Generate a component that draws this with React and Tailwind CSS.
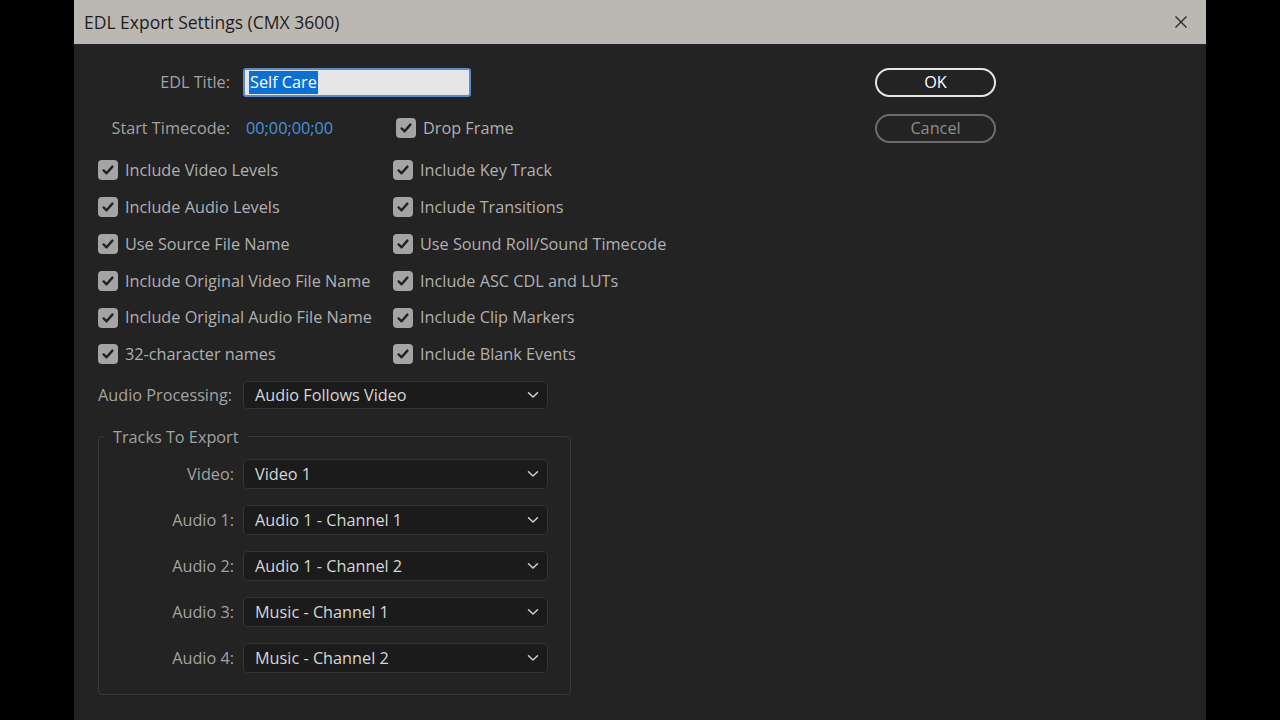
import React from "react";

const font = { fontFamily: '"Open Sans", "Noto Sans", sans-serif' };

function Check({ label }) {
  return (
    <div className="flex items-center h-full">
      <div className="w-[20px] h-[20px] rounded-[4px] bg-[#a4a4a4] flex items-center justify-center shrink-0">
        <svg width="14" height="14" viewBox="0 0 14 14">
          <path d="M2.6 7.4 L5.6 10.3 L11.4 3.6" fill="none" stroke="#222" strokeWidth="2.4" strokeLinecap="round" strokeLinejoin="round" />
        </svg>
      </div>
      <span className="ml-[7px] text-[#b0b0b0] whitespace-nowrap">{label}</span>
    </div>
  );
}

function Chevron() {
  return (
    <svg width="12" height="8" viewBox="0 0 12 8">
      <path d="M1.5 1.8 L6 6 L10.5 1.8" fill="none" stroke="#d0d0d0" strokeWidth="1.5" strokeLinecap="round" strokeLinejoin="round" />
    </svg>
  );
}

function Select({ value, h = "h-[30px]" }) {
  return (
    <div className={`w-[305px] ${h} bg-[#1b1b1b] border border-[#333333] rounded-[4px] flex items-center justify-between pl-[11px] pr-[8px]`}>
      <span className="text-[#d6d6d6] whitespace-nowrap">{value}</span>
      <Chevron />
    </div>
  );
}

export default function App() {
  const left = [
    "Include Video Levels",
    "Include Audio Levels",
    "Use Source File Name",
    "Include Original Video File Name",
    "Include Original Audio File Name",
    "32-character names",
  ];
  const right = [
    "Include Key Track",
    "Include Transitions",
    "Use Sound Roll/Sound Timecode",
    "Include ASC CDL and LUTs",
    "Include Clip Markers",
    "Include Blank Events",
  ];
  const tracks = [
    ["Video:", "Video 1"],
    ["Audio 1:", "Audio 1 - Channel 1"],
    ["Audio 2:", "Audio 1 - Channel 2"],
    ["Audio 3:", "Music - Channel 1"],
    ["Audio 4:", "Music - Channel 2"],
  ];
  return (
    <div className="w-[1280px] h-[720px] bg-black flex justify-center overflow-hidden text-[16.25px]" style={font}>
      <div className="w-[1132px] h-full flex flex-col">
        <div className="h-[44px] bg-[#bbb8b3] flex items-center justify-between pl-[10px] pr-[18px] shrink-0">
          <span className="text-[#1e1e1e] text-[17.5px]">EDL Export Settings (CMX 3600)</span>
          <svg width="14" height="14" viewBox="0 0 14 14">
            <path d="M1.5 1.5 L12.5 12.5 M12.5 1.5 L1.5 12.5" stroke="#2a2a2a" strokeWidth="1.4" />
          </svg>
        </div>
        <div className="flex-1 bg-[#232323] flex pl-[24px] pt-[24px]">
          <div className="w-[777px] flex flex-col">
            <div className="flex items-center h-[29px]">
              <span className="w-[132px] text-right text-[#a2a2a2]">EDL Title:</span>
              <div className="ml-[13px] w-[228px] h-[29px] bg-[#e6e6e6] border-2 border-[#5b8cc6] rounded-[3px] flex items-center pl-[4px]">
                <span className="bg-[#0c6fd4] text-white px-[1px] h-[23px] leading-[23px]">Self Care</span>
              </div>
            </div>
            <div className="flex items-center h-[28px] mt-[17px]">
              <span className="w-[132px] text-right text-[#a2a2a2]">Start Timecode:</span>
              <span className="ml-[16px] w-[150px] text-[#4a92dc]">00;00;00;00</span>
              <Check label="Drop Frame" />
            </div>
            <div className="grid grid-cols-[295px_auto] auto-rows-[36.8px] mt-[10px]">
              {left.map((l, i) => (
                <React.Fragment key={i}>
                  <Check label={l} />
                  <Check label={right[i]} />
                </React.Fragment>
              ))}
            </div>
            <div className="flex items-center h-[28px] mt-[8px]">
              <span className="w-[134px] text-right text-[#a2a2a2] whitespace-nowrap">Audio Processing:</span>
              <div className="ml-[11px]">
                <Select value="Audio Follows Video" h="h-[28px]" />
              </div>
            </div>
            <fieldset className="mt-[16px] w-[473px] h-[270px] border border-[#383838] rounded-[4px] flex flex-col">
              <legend className="ml-[6px] px-[8px] text-[#a2a2a2] leading-[24px]">Tracks To Export</legend>
              <div className="flex flex-col gap-[16px] pt-[10px]">
                {tracks.map(([l, v]) => (
                  <div key={l} className="flex items-center h-[30px]">
                    <span className="w-[135px] text-right text-[#a2a2a2]">{l}</span>
                    <div className="ml-[9px]">
                      <Select value={v} />
                    </div>
                  </div>
                ))}
              </div>
            </fieldset>
          </div>
          <div className="w-[121px] flex flex-col gap-[17px]">
            <div className="h-[29px] rounded-full border-2 border-[#e6e6e6] flex items-center justify-center text-white">OK</div>
            <div className="h-[29px] rounded-full border-2 border-[#6c6c6c] flex items-center justify-center text-[#8e8e8e]">Cancel</div>
          </div>
        </div>
      </div>
    </div>
  );
}
